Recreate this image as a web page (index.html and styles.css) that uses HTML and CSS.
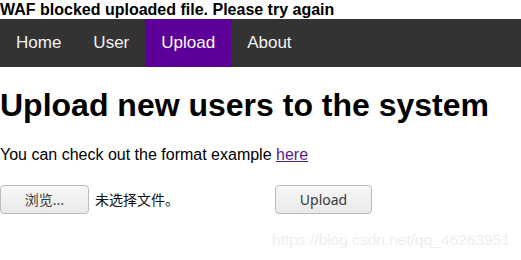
FILE: index.html
```html
<!DOCTYPE html>
<html>
<head>
<meta charset="utf-8">
<link rel="stylesheet" href="styles.css">
</head>
<body>
<div class="alert">WAF blocked uploaded file. Please try again</div>
<nav class="topnav">
  <a href="#" class="navlink">Home</a>
  <a href="#" class="navlink">User</a>
  <a href="#" class="navlink active">Upload</a>
  <a href="#" class="navlink">About</a>
</nav>
<h1 class="title">Upload new users to the system</h1>
<p class="intro">You can check out the format example <a href="#" class="link">here</a></p>
<form class="upload-form">
  <div class="file-input">
    <span class="btn browse">浏览...</span>
    <span class="file-status">未选择文件。</span>
  </div>
  <button type="button" class="btn submit">Upload</button>
</form>
<div class="watermark">https://blog.csdn.net/qq_46263951</div>
</body>
</html>
```
FILE: styles.css
```css
html, body {
  margin: 0;
  padding: 0;
  background: #fff;
}
body {
  font-family: "Liberation Sans", Arial, sans-serif;
  color: #000;
  position: relative;
  width: 521px;
  height: 260px;
  overflow: hidden;
}
.alert {
  font-weight: bold;
  font-size: 16px;
  line-height: 19px;
  height: 19px;
}
.topnav {
  display: flex;
  background: #333;
  height: 48px;
}
.navlink {
  color: #f2f2f2;
  text-decoration: none;
  font-size: 17px;
  padding: 14px 16px;
  line-height: 20px;
}
.navlink.active {
  background: #5c0099;
  color: #fff;
}
.title {
  font-size: 32px;
  font-weight: bold;
  margin: 20px 0 22px;
  line-height: 37px;
}
.intro {
  font-size: 16px;
  margin: 0 0 20px;
  line-height: 18px;
}
.link {
  color: #551a8b;
}
.upload-form {
  display: flex;
  align-items: center;
}
.file-input {
  display: flex;
  align-items: center;
  width: 275px;
}
.btn {
  box-sizing: border-box;
  display: inline-flex;
  align-items: center;
  justify-content: center;
  height: 29px;
  border: 1px solid #bcbcbc;
  border-radius: 4px;
  background: linear-gradient(#f7f7f7, #e9e9e9);
  font-family: "Noto Sans", "Noto Sans CJK SC", sans-serif;
  font-size: 14px;
  color: #3a3a3a;
  padding: 0;
}
.browse {
  width: 89px;
}
.file-status {
  font-family: "Noto Sans CJK SC", sans-serif;
  font-size: 14px;
  margin-left: 6px;
  color: #111;
}
.submit {
  width: 97px;
  margin-top: 1px;
}
.watermark {
  position: absolute;
  left: 272px;
  top: 231px;
  font-size: 15.5px;
  color: #eeeeee;
}
```
